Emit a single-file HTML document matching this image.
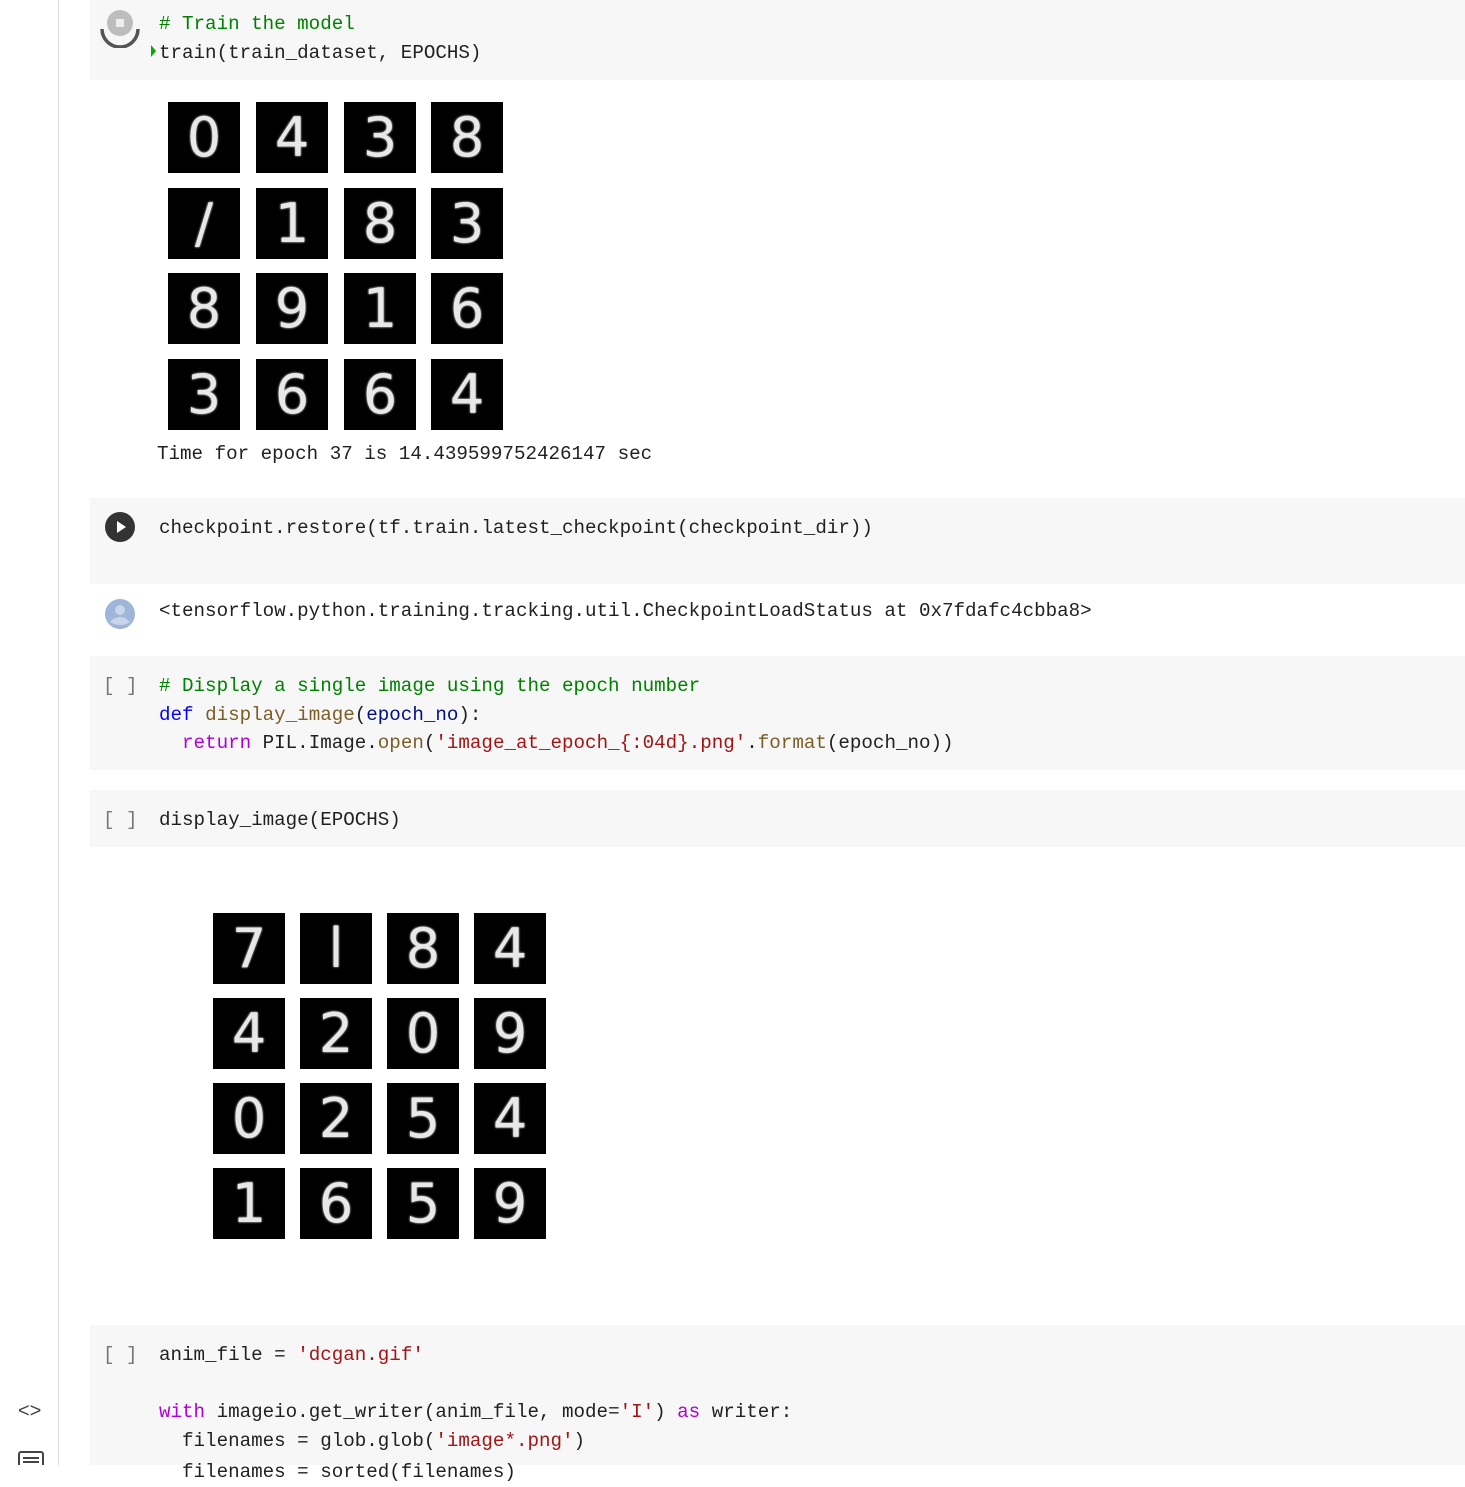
<!DOCTYPE html>
<html><head><meta charset="utf-8"><style>
body{margin:0;width:1465px;height:1465px;overflow:hidden;background:#fff;position:relative;font-family:"Liberation Mono",monospace;font-size:19.2px;color:#212121}
.ab{position:absolute}
.cell{position:absolute;left:90px;right:0;background:#f7f7f7}
.l{position:absolute;white-space:pre;line-height:29px;height:29px}
.c{color:#008000}.k{color:#0000ff}.p{color:#af00db}.s{color:#a31515}.f{color:#795e26}.v{color:#001080}
.br{color:#777}
.t{position:absolute;width:72px;height:71px;background:#000;color:#e8e8e8;font-family:"DejaVu Sans",sans-serif;font-size:54px;text-align:center;line-height:71px;font-weight:normal;text-shadow:0 0 2px #fff}
</style></head><body>
<div class="ab" style="left:58px;top:0;width:1px;height:1465px;background:#dadada"></div>
<div class="cell" style="top:0;height:80px"></div>
<div class="cell" style="top:498px;height:86px"></div>
<div class="cell" style="top:656px;height:114px"></div>
<div class="cell" style="top:790px;height:57px"></div>
<div class="cell" style="top:1325px;height:140px"></div>

<svg class="ab" style="left:98px;top:4px" width="44" height="44" viewBox="0 0 44 44"><circle cx="22" cy="19" r="13" fill="#bdbdbd"/><rect x="18" y="15" width="8" height="8" fill="#eee"/><path d="M4 25 A18 18 0 0 0 40 25" stroke="#555" stroke-width="3.5" fill="none"/></svg>
<div class="l c" style="left:159px;top:10px"># Train the model</div>
<div class="ab" style="left:151px;top:45px;width:0;height:0;border-top:6px solid transparent;border-bottom:6px solid transparent;border-left:5px solid #0a0"></div>
<div class="l" style="left:159px;top:39px">train(train_dataset, EPOCHS)</div>

<div class="t" style="left:168px;top:102px">0</div><div class="t" style="left:256px;top:102px">4</div><div class="t" style="left:344px;top:102px">3</div><div class="t" style="left:431px;top:102px">8</div>
<div class="t" style="left:168px;top:188px">/</div><div class="t" style="left:256px;top:188px">1</div><div class="t" style="left:344px;top:188px">8</div><div class="t" style="left:431px;top:188px">3</div>
<div class="t" style="left:168px;top:273px">8</div><div class="t" style="left:256px;top:273px">9</div><div class="t" style="left:344px;top:273px">1</div><div class="t" style="left:431px;top:273px">6</div>
<div class="t" style="left:168px;top:359px">3</div><div class="t" style="left:256px;top:359px">6</div><div class="t" style="left:344px;top:359px">6</div><div class="t" style="left:431px;top:359px">4</div>
<div class="l" style="left:157px;top:440px">Time for epoch 37 is 14.439599752426147 sec</div>

<svg class="ab" style="left:104px;top:511px" width="32" height="32"><circle cx="16" cy="16" r="15" fill="#333"/><path d="M13 10 L22 16 L13 22Z" fill="#fff"/></svg>
<div class="l" style="left:159px;top:514px">checkpoint.restore(tf.train.latest_checkpoint(checkpoint_dir))</div>
<svg class="ab" style="left:104px;top:598px" width="32" height="32"><circle cx="16" cy="16" r="15" fill="#9fb6d8"/><circle cx="16" cy="12" r="5" fill="#c9d6ea"/><path d="M6 24 Q16 14 26 24 Q16 30 6 24Z" fill="#c9d6ea"/></svg>
<div class="l" style="left:159px;top:597px">&lt;tensorflow.python.training.tracking.util.CheckpointLoadStatus at 0x7fdafc4cbba8&gt;</div>

<div class="l br" style="left:103px;top:672px">[ ]</div>
<div class="l c" style="left:159px;top:672px"># Display a single image using the epoch number</div>
<div class="l" style="left:159px;top:701px"><span class="k">def</span> <span class="f">display_image</span>(<span class="v">epoch_no</span>):</div>
<div class="l" style="left:159px;top:729px">  <span class="p">return</span> PIL.Image.<span class="f">open</span>(<span class="s">'image_at_epoch_{:04d}.png'</span>.<span class="f">format</span>(epoch_no))</div>

<div class="l br" style="left:103px;top:806px">[ ]</div>
<div class="l" style="left:159px;top:806px">display_image(EPOCHS)</div>

<div class="t" style="left:213px;top:913px">7</div><div class="t" style="left:300px;top:913px">l</div><div class="t" style="left:387px;top:913px">8</div><div class="t" style="left:474px;top:913px">4</div>
<div class="t" style="left:213px;top:998px">4</div><div class="t" style="left:300px;top:998px">2</div><div class="t" style="left:387px;top:998px">0</div><div class="t" style="left:474px;top:998px">9</div>
<div class="t" style="left:213px;top:1083px">0</div><div class="t" style="left:300px;top:1083px">2</div><div class="t" style="left:387px;top:1083px">5</div><div class="t" style="left:474px;top:1083px">4</div>
<div class="t" style="left:213px;top:1168px">1</div><div class="t" style="left:300px;top:1168px">6</div><div class="t" style="left:387px;top:1168px">5</div><div class="t" style="left:474px;top:1168px">9</div>

<div class="l br" style="left:103px;top:1341px">[ ]</div>
<div class="l" style="left:159px;top:1341px">anim_file = <span class="s">'dcgan.gif'</span></div>
<div class="l" style="left:159px;top:1398px"><span class="p">with</span> imageio.get_writer(anim_file, mode=<span class="s">'I'</span>) <span class="p">as</span> writer:</div>
<div class="l" style="left:159px;top:1427px">  filenames = glob.glob(<span class="s">'image*.png'</span>)</div>
<div class="l" style="left:159px;top:1458px">  filenames = sorted(filenames)</div>

<div class="l" style="left:18px;top:1397px;color:#444;font-family:'Liberation Sans',sans-serif;font-size:20px">&lt;&gt;</div>
<svg class="ab" style="left:18px;top:1451px" width="26" height="14"><rect x="1" y="1" width="24" height="20" rx="2" fill="none" stroke="#444" stroke-width="2"/><path d="M5 7h16M5 11h16" stroke="#444" stroke-width="2"/></svg>
</body></html>
